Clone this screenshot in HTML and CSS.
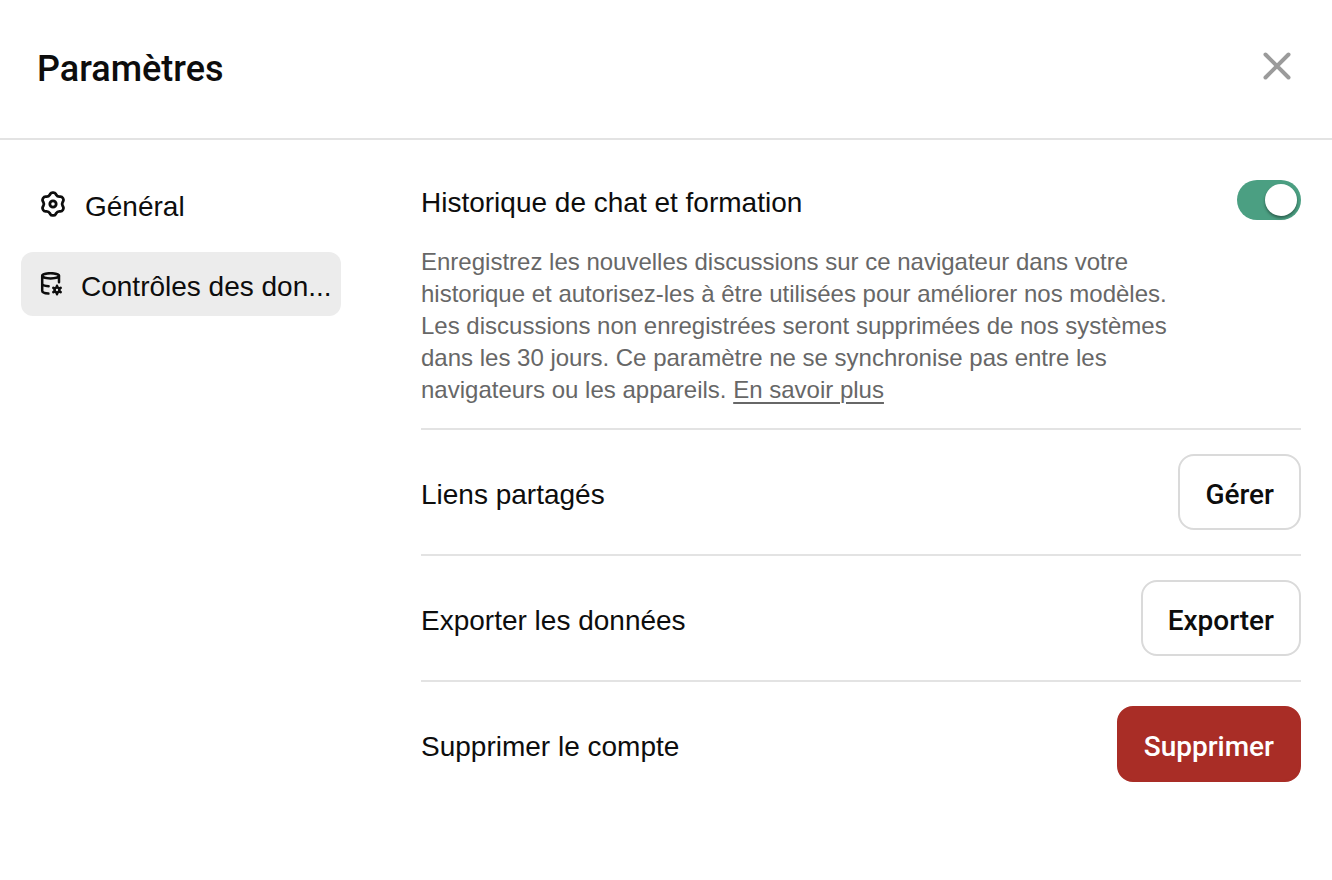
FILE: index.html
```html
<!DOCTYPE html>
<html lang="fr">
<head>
  <meta charset="UTF-8" />
  <title>Paramètres</title>
  <meta name="viewport" content="width=device-width, initial-scale=1.0" />
  <link rel="stylesheet" href="styles.css">
</head>
<body>
  <header class="header">
    <h1>Paramètres</h1>
    <button class="close" type="button" aria-label="Fermer">
      <svg width="40" height="40" viewBox="0 0 40 40" fill="none" stroke="currentColor" stroke-width="4" stroke-linecap="round">
        <path d="M8.5 8.5l23 23M31.5 8.5l-23 23" />
      </svg>
    </button>
  </header>

  <div class="layout">
    <nav class="tabs">
      <button class="tab" type="button">
        <svg width="28" height="28" viewBox="1 1 22 22" fill="none" stroke="currentColor" stroke-width="2.2" stroke-linejoin="round">
          <path d="M11.64 3c-.71 0-1.36.375-1.72.986l-.424.72c-.535.909-1.507 1.47-2.561 1.479l-.835.007c-.709.006-1.362.386-1.716 1l-.356.616c-.355.614-.358 1.37-.008 1.986l.411.727c.52.917.52 2.04 0 2.958l-.411.727c-.35.616-.347 1.372.008 1.986l.356.616c.354.614 1.007.994 1.716 1l.835.007c1.054.009 2.026.57 2.561 1.479l.424.72c.36.611 1.01.986 1.72.986h.716c.709 0 1.364-.375 1.724-.986l.424-.72c.534-.909 1.507-1.47 2.561-1.479l.835-.007c.709-.006 1.362-.386 1.716-1l.356-.616c.354-.614.357-1.37.008-1.986l-.412-.727c-.52-.917-.52-2.04 0-2.958l.412-.727c.349-.616.346-1.372-.008-1.986l-.356-.616c-.354-.614-1.007-.994-1.716-1l-.835-.007c-1.054-.009-2.027-.57-2.561-1.479l-.424-.72C13.72 3.375 13.065 3 12.356 3z" />
          <circle cx="12" cy="12" r="2.5" />
        </svg>
        <span>Général</span>
      </button>
      <button class="tab active" type="button">
        <svg width="24" height="24" viewBox="0 0 24 24" fill="none" stroke="currentColor" stroke-width="2.5" stroke-linecap="round">
          <ellipse cx="11.6" cy="3.8" rx="8.4" ry="2.6" />
          <path d="M3.2 4v14.8c0 1.5 2.4 2.6 6.2 2.8M3.2 11.6c0 1.5 2.6 2.5 6.4 2.6M20 4v6.2" />
          <!-- petite roue dentée -->
          <circle cx="18" cy="18" r="2.4" />
          <path d="M18 14.8v-1M18 22.2v-1M20.8 16.4l.9-.5M14.3 20.1l.9-.5M20.8 19.6l.9.5M14.3 15.9l.9.5" />
        </svg>
        <span>Contrôles des don...</span>
      </button>
    </nav>

    <main class="panel">
      <section class="history">
        <div class="history-top">
          <label for="chatHistory">Historique de chat et formation</label>
          <input class="switch" type="checkbox" role="switch" id="chatHistory" checked>
        </div>
        <p>Enregistrez les nouvelles discussions sur ce navigateur dans votre historique et autorisez-les à être utilisées pour améliorer nos modèles. Les discussions non enregistrées seront supprimées de nos systèmes dans les 30 jours. Ce paramètre ne se synchronise pas entre les navigateurs ou les appareils. <a href="#">En savoir plus</a></p>
      </section>
      <div class="row">
        <span>Liens partagés</span>
        <button class="btn" type="button">Gérer</button>
      </div>
      <div class="row">
        <span>Exporter les données</span>
        <button class="btn" type="button">Exporter</button>
      </div>
      <div class="row">
        <span>Supprimer le compte</span>
        <button class="btn danger" type="button">Supprimer</button>
      </div>
    </main>
  </div>
</body>
</html>
```
FILE: styles.css
```css
* {
  box-sizing: border-box;
}

body {
  margin: 0;
  background: #fff;
  color: #0d0d0d;
  font-family: "Liberation Sans", Arial, sans-serif;
  font-size: 28px;
  line-height: 40px;
}

button {
  font: inherit;
  color: inherit;
  cursor: pointer;
}

.header {
  display: flex;
  justify-content: space-between;
  align-items: flex-start;
  padding: 46px 35px 46px 37px;
  border-bottom: 2px solid #e3e3e3;
}

h1 {
  margin: 0;
  font-family: Roboto, sans-serif;
  font-size: 36px;
  line-height: 46px;
  font-weight: 500;
}

.close {
  display: flex;
  padding: 0;
  border: none;
  background: none;
  color: #9b9b9b;
}

.layout {
  display: flex;
  gap: 80px;
  padding: 32px 31px 32px 21px;
}

.tabs {
  display: flex;
  flex-direction: column;
  gap: 16px;
  flex: 0 0 320px;
  min-width: 0;
}

.tab {
  display: flex;
  align-items: center;
  gap: 18px;
  width: 100%;
  height: 64px;
  padding: 6px 8px 0 18px;
  border: none;
  border-radius: 12px;
  background: none;
  text-align: left;
}

.tab svg {
  flex-shrink: 0;
  margin-bottom: 6px;
}

.tab span {
  min-width: 0;
  overflow: hidden;
  text-overflow: ellipsis;
  white-space: nowrap;
}

.tab.active {
  background: #ececec;
}

.panel {
  flex: 1;
  min-width: 0;
  padding-top: 8px;
}

.history {
  padding-bottom: 22px;
}

.history-top {
  display: flex;
  justify-content: space-between;
  align-items: flex-start;
}

.history-top label {
  padding-top: 3px;
}

.history p {
  max-width: 760px;
  margin: 23px 0 0;
  color: #676767;
  font-size: 24px;
  line-height: 32px;
}

.history a {
  color: inherit;
  text-underline-offset: 4px;
  text-decoration-thickness: 2px;
}

.switch {
  appearance: none;
  display: flex;
  flex-shrink: 0;
  width: 64px;
  height: 40px;
  margin: 0;
  padding: 4px;
  border-radius: 20px;
  background: #4b9f82;
  cursor: pointer;
}

.switch::before {
  content: "";
  width: 32px;
  height: 32px;
  border-radius: 50%;
  background: #fff;
  box-shadow: 0 2px 3px rgba(0, 0, 0, 0.4);
}

.switch:checked {
  justify-content: flex-end;
}

.row {
  display: flex;
  justify-content: space-between;
  align-items: center;
  padding: 24px 0;
  border-top: 2px solid #e3e3e3;
}

.row span {
  padding-top: 6px;
}

.btn {
  padding: 20px 25px 14px;
  border: 2px solid #dadada;
  border-radius: 16px;
  background: #fff;
  font-family: Roboto, sans-serif;
  font-weight: 500;
  line-height: 38px;
}

.btn.danger {
  border-color: #a92d26;
  background: #a92d26;
  color: #fff;
}
```
